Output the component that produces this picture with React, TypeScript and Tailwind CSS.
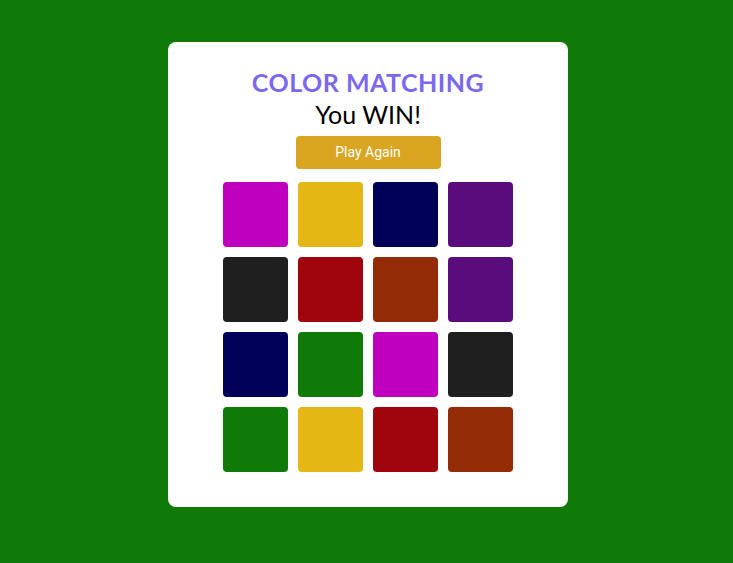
const tiles = [
  '#bf00bf', '#e4b714', '#000058', '#5b0c7c',
  '#1f1f1f', '#a0050d', '#932c06', '#5b0c7c',
  '#000058', '#107a08', '#bf00bf', '#1f1f1f',
  '#107a08', '#e4b714', '#a0050d', '#932c06',
];

export default function App() {
  return (
    <div className="min-h-[563px] bg-[#107a08] flex justify-center items-start pt-[42px] pl-[3px]">
      <div className="w-[400px] h-[465px] bg-white rounded-lg flex flex-col items-center">
        <h1 className="mt-[23px] text-[25px] leading-[34px] font-bold tracking-[0.5px] text-[#7b68ee] font-['Lato',sans-serif]">
          COLOR MATCHING
        </h1>
        <p className="text-[25px] leading-[30px] text-black font-['Lato',sans-serif]">You WIN!</p>
        <button className="mt-[7px] w-[145px] h-[33px] rounded bg-[#daa520] text-white text-[14px] font-['Roboto',sans-serif]">
          Play Again
        </button>
        <div className="mt-[13px] grid grid-cols-4 gap-[10px]">
          {tiles.map((c, i) => (
            <div key={i} className="w-[65px] h-[65px] rounded" style={{ backgroundColor: c }} />
          ))}
        </div>
      </div>
    </div>
  );
}
